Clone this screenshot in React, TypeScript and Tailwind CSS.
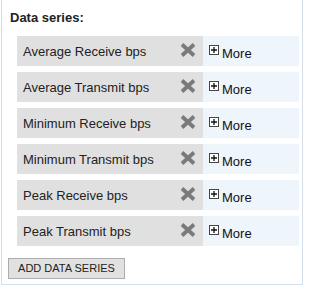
import React from "react";

const series = [
  "Average Receive bps",
  "Average Transmit bps",
  "Minimum Receive bps",
  "Minimum Transmit bps",
  "Peak Receive bps",
  "Peak Transmit bps",
];

function XIcon() {
  return (
    <svg width="16" height="14" viewBox="0 0 16 14" className="block">
      <path d="M2 1.5 L14 12.5 M14 1.5 L2 12.5" stroke="#7a7a7a" strokeWidth="3.8" strokeLinecap="butt" />
    </svg>
  );
}

function PlusBox() {
  return (
    <svg width="10" height="10" viewBox="0 0 10 10" className="block">
      <rect x="0.5" y="0.5" width="9" height="9" fill="#ffffff" stroke="#444444" strokeWidth="1" />
      <path d="M2 5 H8 M5 2 V8" stroke="#111111" strokeWidth="1.3" />
    </svg>
  );
}

export default function App() {
  return (
    <div className="w-[310px] h-[292px] bg-white" style={{ fontFamily: '"Liberation Sans", Arial, sans-serif' }}>
      <div className="ml-[1px] w-[302px] h-[285px] border-l border-r border-b border-[#d3dfea] pl-[5px] pt-[10px]">
        <div className="ml-[3px] text-[13px] leading-[15px] font-bold text-[#222]">Data series:</div>
        <div className="mt-[11px] ml-[10px] flex flex-col gap-[6px]">
          {series.map((s) => (
            <div key={s} className="flex h-[30px]">
              <div className="w-[186px] bg-[#e0e0e0] flex items-center justify-between pl-[6px] pr-[7px]">
                <span className="text-[13px] text-[#222] leading-[15px]">{s}</span>
                <span className="-mt-[3px]"><XIcon /></span>
              </div>
              <div className="w-[96px] bg-[#eef5fb] flex items-start pl-[6px] pt-[9px]">
                <PlusBox />
                <span className="ml-[3px] mt-[1px] text-[13px] leading-[15px] text-[#111]">More</span>
              </div>
            </div>
          ))}
        </div>
        <button className="mt-[12px] ml-[1px] h-[21px] w-[117px] bg-[#e1e1e1] border border-[#adadad] text-[11px] leading-[13px] text-[#222] uppercase flex items-center justify-center">
          Add data series
        </button>
      </div>
    </div>
  );
}
